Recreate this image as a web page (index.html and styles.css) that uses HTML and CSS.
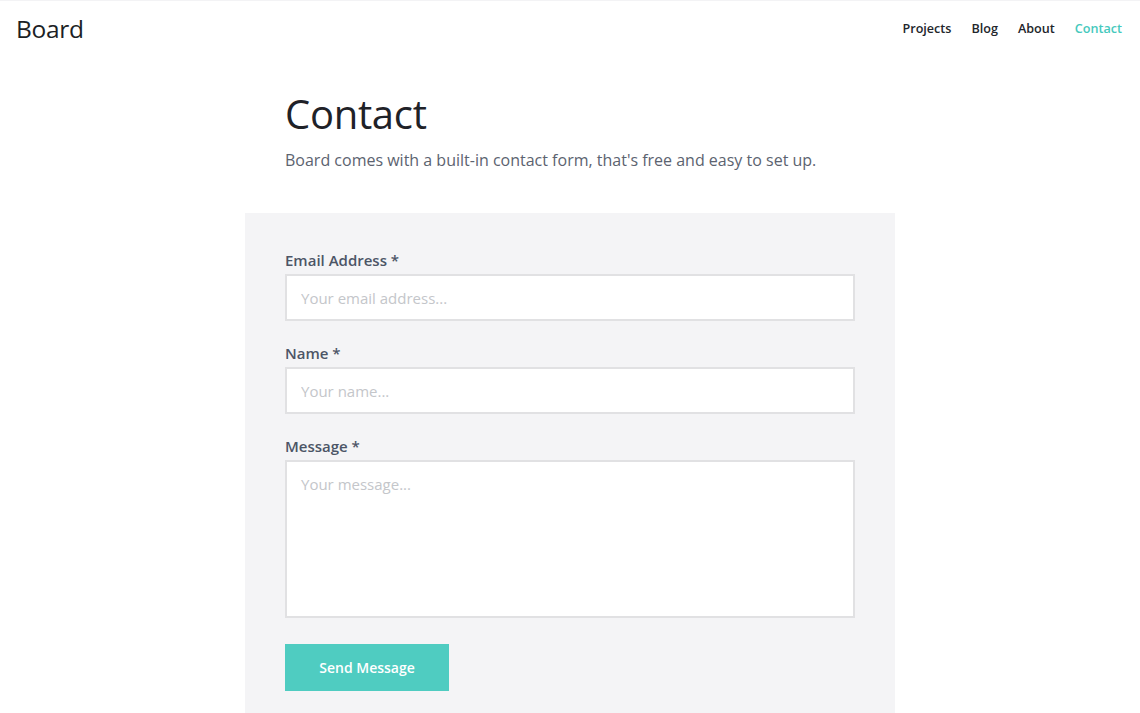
FILE: index.html
```html
<!DOCTYPE html>
<html>

<head>
    <meta charset="utf-8">
    <meta name="viewport" content="width=device-width, initial-scale=1.0">
    <title>Contact | Board</title>
    <link rel="stylesheet" href="styles.css">
</head>

<body>
    <header class="site-header">
        <a class="logo" href="#">Board</a>
        <nav class="nav">
            <a href="#">Projects</a>
            <a href="#">Blog</a>
            <a href="#">About</a>
            <a class="active" href="#">Contact</a>
        </nav>
    </header>
    <main class="page">
        <div class="intro">
            <h1>Contact</h1>
            <p>Board comes with a built-in contact form, that's free and easy to set up.</p>
        </div>
        <form class="contact-form">
            <label for="email">Email Address *</label>
            <input id="email" type="email" placeholder="Your email address...">
            <label for="name">Name *</label>
            <input id="name" type="text" placeholder="Your name...">
            <label for="message">Message *</label>
            <textarea id="message" placeholder="Your message..."></textarea>
            <button type="button">Send Message</button>
        </form>
    </main>
</body>

</html>
```

FILE: styles.css
```css
body {
    font-family: "Open Sans", "Noto Sans", Arial, sans-serif;
    color: #1f2228;
    background-color: #ffffff;
    margin: 0;
    padding: 0;
}

a {
    text-decoration: none;
    color: inherit;
}

.site-header {
    display: flex;
    justify-content: space-between;
    align-items: center;
    height: 54px;
    padding: 0 18px 0 16px;
    border-top: 1px solid #f3f3f5;
}

.logo {
    font-size: 24.5px;
    font-weight: 500;
    letter-spacing: -0.3px;
    color: #1c1f25;
}

.nav {
    display: flex;
    gap: 20px;
    font-size: 12.6px;
    font-weight: 600;
    color: #22252b;
}

.nav a.active {
    color: #45c9bd;
}

.page {
    width: 650px;
    margin: 0 auto;
}

.intro {
    padding: 35px 40px 41px;
}

.intro h1 {
    font-size: 40px;
    font-weight: 500;
    line-height: 48px;
    margin: 0 0 10px;
    letter-spacing: -0.3px;
    color: #1f2228;
}

.intro p {
    font-size: 16px;
    line-height: 24px;
    margin: 0;
    color: #5c6370;
}

.contact-form {
    display: flex;
    flex-direction: column;
    align-items: flex-start;
    background: #f4f4f6;
    padding: 37px 40px 40px;
}

.contact-form label {
    font-size: 15px;
    font-weight: 600;
    line-height: 20px;
    color: #4c5566;
    margin: 0 0 4px;
}

.contact-form input,
.contact-form textarea {
    box-sizing: border-box;
    width: 100%;
    height: 47px;
    margin: 0 0 22px;
    padding: 0 14px;
    border: 2px solid #e1e1e3;
    background: #ffffff;
    font-family: inherit;
    font-size: 15px;
    color: #333;
    resize: none;
}

.contact-form textarea {
    height: 158px;
    margin-bottom: 26px;
    padding: 12px 14px;
}

.contact-form input::placeholder,
.contact-form textarea::placeholder {
    color: #c4c6ca;
}

.contact-form button {
    width: 164px;
    height: 47px;
    border: 0;
    background: #4fccc1;
    color: #ffffff;
    font-family: inherit;
    font-size: 14px;
    font-weight: 600;
}
```
